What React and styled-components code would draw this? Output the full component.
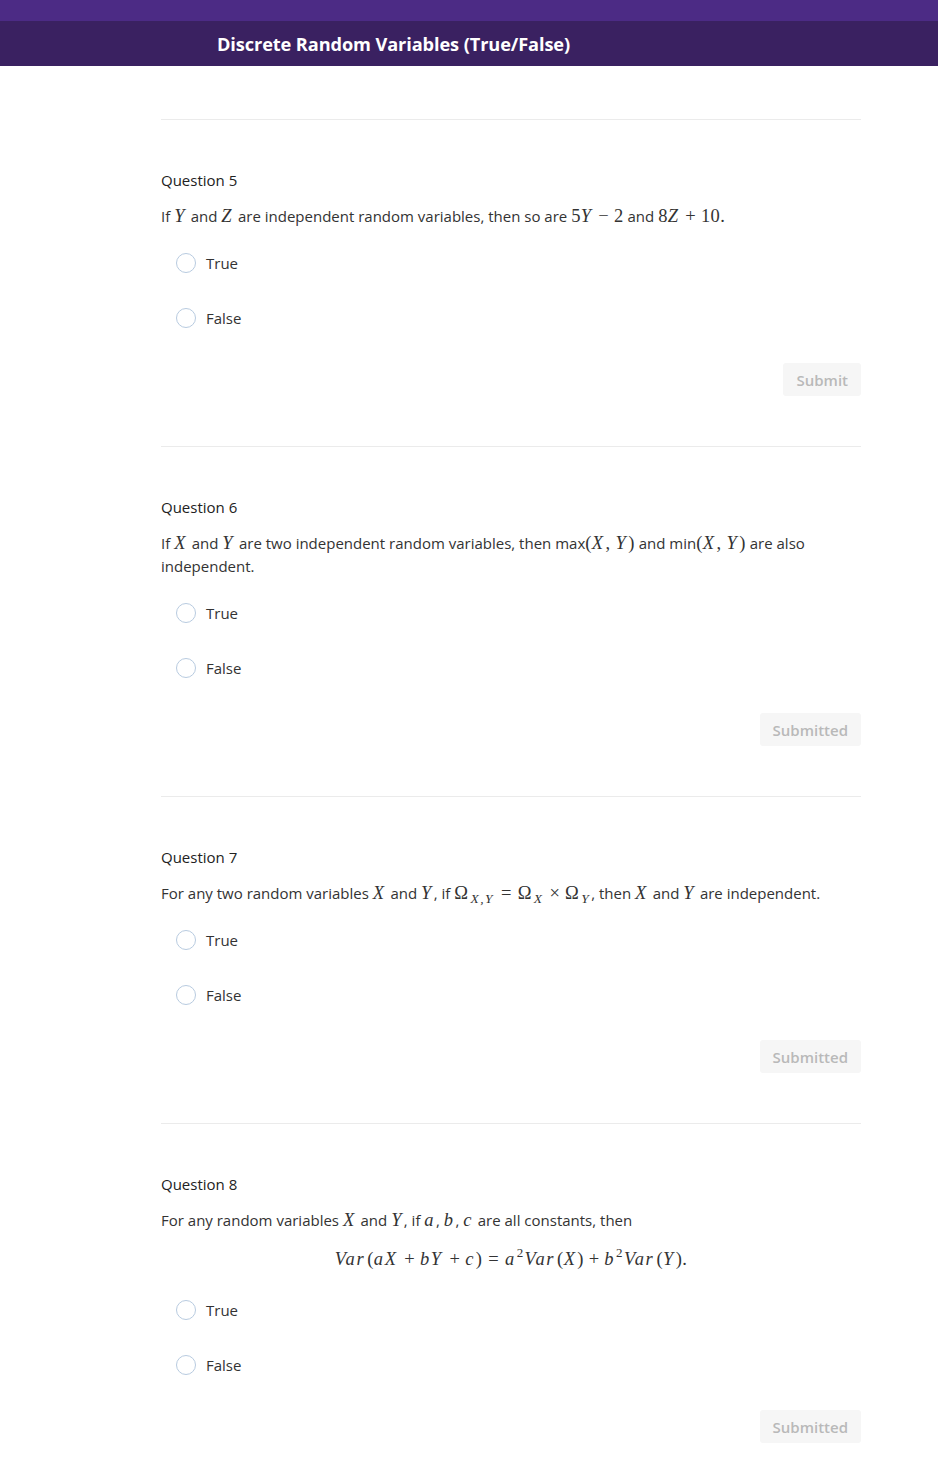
import React from 'react'
import styled, { createGlobalStyle } from 'styled-components'

const GlobalStyle = createGlobalStyle`
  html, body {
    margin: 0;
    padding: 0;
    background: #fff;
  }
  body {
    font-family: "Open Sans", "Liberation Sans", sans-serif;
    color: #333;
  }
`

const TopBand = styled.div`
  height: 21px;
  background: #4c2b85;
`

const Header = styled.header`
  height: 45px;
  display: flex;
  align-items: center;
  padding-left: 217px;
  background: #3a2161;

  & > h1 {
    margin: 0;
    color: #fff;
    font-size: 18.2px;
    font-weight: 700;
    letter-spacing: -0.1px;
  }
`

const Main = styled.main`
  width: 700px;
  margin-left: 161px;
  padding-top: 53px;
`

const Question = styled.section`
  border-top: 1px solid #ebebeb;
  padding: 49px 0 50px;

  &:last-child {
    padding-bottom: 16px;
  }
`

const Label = styled.div`
  font-size: 15px;
  line-height: 23px;
  color: #222;
`

const Prompt = styled.p`
  margin: 13px 0 0;
  font-size: 15px;
  line-height: 23px;
  color: #333;
`

const Display = styled.div`
  margin: 14px 0 10px;
  height: 26px;
  line-height: 26px;
  text-align: center;
`

const Options = styled.div`
  margin-top: 7px;
  padding-left: 15px;
`

const Option = styled.label`
  display: flex;
  align-items: center;
  gap: 10px;
  height: 55px;
  font-size: 15px;
  color: #333;
`

const Radio = styled.span`
  width: 18px;
  height: 18px;
  border: 1px solid #b8cbe0;
  border-radius: 50%;
  background: #fff;
`

const Actions = styled.div`
  display: flex;
  justify-content: flex-end;
  margin-top: 18px;
`

const Button = styled.button`
  height: 33px;
  padding: 0 13px;
  border: none;
  border-radius: 3px;
  background: #f6f6f6;
  color: #b9b9b9;
  font-family: "Open Sans", "Liberation Sans", sans-serif;
  font-size: 15px;
  font-weight: 600;
`

const M = styled.span`
  font-family: "Liberation Serif", "DejaVu Serif", serif;
  font-size: 18.5px;
  line-height: 1;
  letter-spacing: 0.4px;
  white-space: nowrap;
  color: #333;
`

const V = styled.i`
  font-family: "Liberation Serif", "DejaVu Serif", serif;
  font-size: 18.5px;
  line-height: 1;
  font-style: italic;
  letter-spacing: ${p => (p.$wide ? '1.6px' : '0.4px')};
  padding-right: 2px;
`

const Op = styled.span`
  margin: 0 ${p => (p.$rel ? '0.32em' : '0.26em')};
`

const Sub = styled.sub`
  font-style: italic;
  font-size: 13.5px;
  letter-spacing: 1.5px;
  vertical-align: -4px;
  line-height: 0;
  padding: 0 1px 0 2px;
`

const Sup = styled.sup`
  font-size: 13px;
  vertical-align: 8px;
  line-height: 0;
  padding-right: 1px;
`

const questions = [
  {
    num: 5,
    button: 'Submit',
    text: (
      <>
        If <V>Y</V> and <V>Z</V> are independent random variables, then so are{' '}
        <M>
          5<V>Y</V>
          <Op>−</Op>2
        </M>{' '}
        and{' '}
        <M>
          8<V>Z</V>
          <Op>+</Op>10.
        </M>
      </>
    ),
  },
  {
    num: 6,
    button: 'Submitted',
    text: (
      <>
        If <V>X</V> and <V>Y</V> are two independent random variables, then max
        <M>
          (<V>X</V>, <V>Y</V>)
        </M>{' '}
        and min
        <M>
          (<V>X</V>, <V>Y</V>)
        </M>{' '}
        are also independent.
      </>
    ),
  },
  {
    num: 7,
    button: 'Submitted',
    text: (
      <>
        For any two random variables <V>X</V> and <V>Y</V>, if{' '}
        <M>
          Ω<Sub>X,Y</Sub>
          <Op $rel>=</Op>Ω<Sub>X</Sub>
          <Op>×</Op>Ω<Sub>Y</Sub>
        </M>
        , then <V>X</V> and <V>Y</V> are independent.
      </>
    ),
  },
  {
    num: 8,
    button: 'Submitted',
    text: (
      <>
        For any random variables <V>X</V> and <V>Y</V>, if <V>a</V>, <V>b</V>, <V>c</V> are all
        constants, then
      </>
    ),
    display: (
      <M>
        <V $wide>Var</V>(<V $wide>aX</V>
        <Op>+</Op>
        <V $wide>bY</V>
        <Op>+</Op>
        <V>c</V>)<Op $rel>=</Op>
        <V>a</V>
        <Sup>2</Sup>
        <V $wide>Var</V>(<V>X</V>)<Op>+</Op>
        <V>b</V>
        <Sup>2</Sup>
        <V $wide>Var</V>(<V>Y</V>).
      </M>
    ),
  },
]

export default function App() {
  return (
    <>
      <GlobalStyle />
      <TopBand />
      <Header>
        <h1>Discrete Random Variables (True/False)</h1>
      </Header>
      <Main>
        {questions.map(q => (
          <Question key={q.num}>
            <Label>Question {q.num}</Label>
            <Prompt>{q.text}</Prompt>
            {q.display && <Display>{q.display}</Display>}
            <Options>
              {['True', 'False'].map(o => (
                <Option key={o}>
                  <Radio />
                  {o}
                </Option>
              ))}
            </Options>
            <Actions>
              <Button disabled>{q.button}</Button>
            </Actions>
          </Question>
        ))}
      </Main>
    </>
  )
}
